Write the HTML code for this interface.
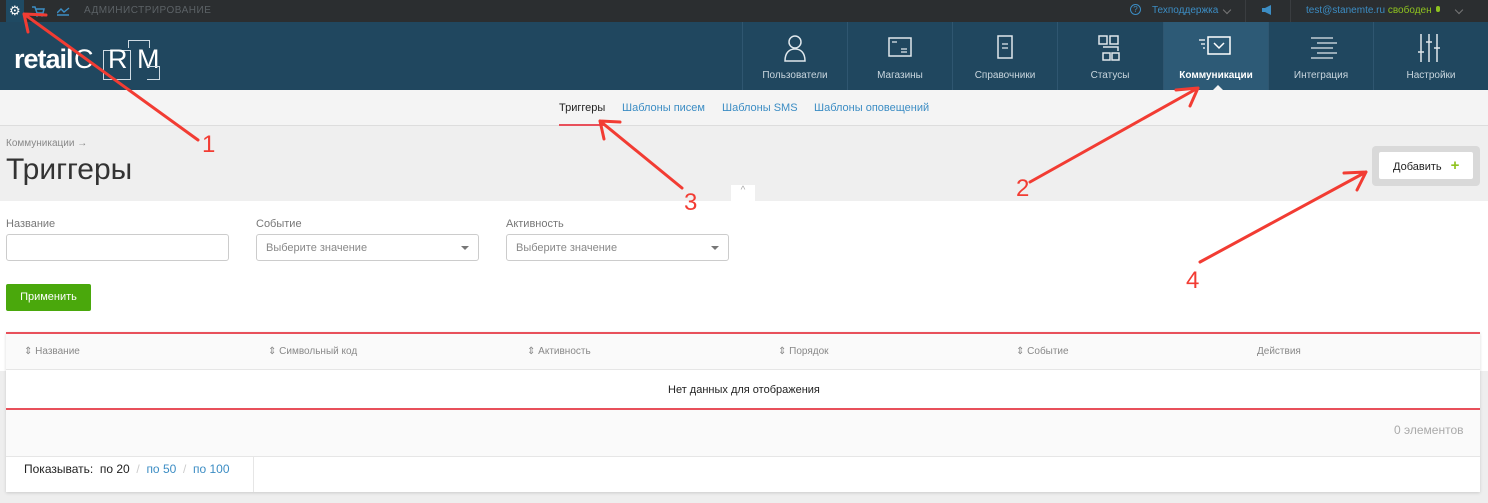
<!DOCTYPE html>
<html><head><meta charset="utf-8"><style>
*{box-sizing:border-box;margin:0;padding:0}
body{width:1488px;height:503px;overflow:hidden;font-family:"Liberation Sans",sans-serif;background:#eeeeee;position:relative;font-size:11px;color:#333}
.top{position:absolute;left:0;top:0;width:1488px;height:22px;background:#2b2e30}
.nav{position:absolute;left:0;top:22px;width:1488px;height:68px;background:#20475f}
.tab{position:absolute;top:0;height:68px;width:105px;border-left:1px solid #2f5670;color:#c9d6de;font-size:10px;text-align:center}
.tab span{position:absolute;left:0;right:0;top:48px}
.tab svg{position:absolute;left:39px;top:12px}
.sub{position:absolute;left:0;top:90px;width:1488px;height:36px;background:#f4f4f4;border-bottom:1px solid #ddd}
.hdr{position:absolute;left:0;top:126px;width:1488px;height:75px;background:#efefef}
.white{position:absolute;left:0;top:201px;width:1488px;height:170px;background:#fff}
.lbl{position:absolute;top:218px;color:#777;font-size:11px}
.inp{position:absolute;top:234px;width:223px;height:27px;border:1px solid #ccc;border-radius:3px;background:#fff;color:#888;font-size:11px;padding:7px 9px}
.inp i{position:absolute;right:9px;top:11px;border:4px solid transparent;border-top:4px solid #777}
.box{position:absolute;left:6px;top:332px;width:1474px;height:160px;background:#fff;box-shadow:0 1px 3px rgba(0,0,0,.15)}
.th{position:absolute;top:346px;color:#888;font-size:10px}
.chev{position:absolute;top:7px;width:6px;height:6px;border-right:1px solid #777;border-bottom:1px solid #777;transform:rotate(45deg)}
</style></head><body>
<div class="top">
 <div style="position:absolute;left:6px;top:0;width:18px;height:22px;background:#1f4a63"></div>
 <span style="position:absolute;left:9px;top:3px;color:#fff;font-size:13px">⚙</span>
 <svg style="position:absolute;left:32px;top:6px" width="13" height="11"><path d="M0 1h3l2 6h6l1-4H4" stroke="#3c8dc4" stroke-width="1.5" fill="none"/><circle cx="5" cy="9.5" r="1.2" fill="#3c8dc4"/><circle cx="10" cy="9.5" r="1.2" fill="#3c8dc4"/></svg>
 <svg style="position:absolute;left:57px;top:6px" width="13" height="10"><path d="M0 7l4-4 3 3 5-4M0 9h12" stroke="#3c8dc4" stroke-width="1.4" fill="none"/></svg>
 <span style="position:absolute;left:84px;top:5px;color:#5c6266;font-size:10px;letter-spacing:.5px">АДМИНИСТРИРОВАНИЕ</span>
 <span style="position:absolute;left:1130px;top:4px;width:11px;height:11px;border:1px solid #3c8dc4;border-radius:50%;color:#3c8dc4;font-size:8px;text-align:center;line-height:10px">?</span>
 <span style="position:absolute;left:1152px;top:5px;color:#3c8dc4;font-size:10px">Техподдержка</span>
 <i class="chev" style="left:1224px"></i>
 <div style="position:absolute;left:1245px;top:0;width:1px;height:22px;background:#3a3d40"></div>
 <svg style="position:absolute;left:1262px;top:5px" width="12" height="10"><path d="M0 3h3l6-3v10L3 7H0z" fill="#3c8dc4"/></svg>
 <div style="position:absolute;left:1290px;top:0;width:1px;height:22px;background:#3a3d40"></div>
 <span style="position:absolute;left:1306px;top:5px;color:#3c8dc4;font-size:10px">test@stanemte.ru <b style="color:#8fc31f;font-weight:normal">свободен</b></span>
 <span style="position:absolute;left:1436px;top:6px;width:4px;height:6px;background:#8fc31f;border-radius:2px"></span>
 <i class="chev" style="left:1456px"></i>
</div>
<div class="nav">
 <div style="position:absolute;left:14px;top:22px;color:#fff;font-size:27px;font-weight:bold;letter-spacing:-1px">retail</div>
 <div style="position:absolute;left:74px;top:22px;color:#fff;font-size:27px">C</div>
 <div style="position:absolute;left:103px;top:28px;width:28px;height:30px;border:1px solid #cfdbe3"></div>
 <div style="position:absolute;left:108px;top:22px;color:#fff;font-size:27px">R</div>
 <div style="position:absolute;left:128px;top:18px;width:22px;height:8px;border:1px solid #cfdbe3;border-bottom:0"></div>
 <div style="position:absolute;left:137px;top:22px;color:#fff;font-size:27px">M</div>
 <div style="position:absolute;left:147px;top:44px;width:13px;height:14px;border:1px solid #cfdbe3;border-left:0"></div>
 <div class="tab" style="left:742px"><svg width="26" height="28"><circle cx="13" cy="8" r="6" stroke="#dfe7ec" stroke-width="1.5" fill="none"/><path d="M3 27c0-8 4-12 10-12s10 4 10 12z" stroke="#dfe7ec" stroke-width="1.5" fill="none"/></svg><span>Пользователи</span></div>
 <div class="tab" style="left:847px"><svg width="26" height="28"><rect x="2" y="4" width="22" height="18" stroke="#dfe7ec" stroke-width="1.5" fill="none"/><path d="M5 8h5M14 15h6M14 18h6" stroke="#dfe7ec" stroke-width="1.2"/></svg><span>Магазины</span></div>
 <div class="tab" style="left:952px"><svg width="26" height="28"><rect x="6" y="2" width="14" height="22" stroke="#dfe7ec" stroke-width="1.5" fill="none"/><path d="M10 10h6M10 14h6" stroke="#dfe7ec" stroke-width="1.2"/></svg><span>Справочники</span></div>
 <div class="tab" style="left:1057px"><svg width="26" height="28"><path d="M2 2h8v8H2zM13 2h8v8h-8zM6 13h15v4M6 19h7v7H6zM15 19h7v7h-7z" stroke="#dfe7ec" stroke-width="1.5" fill="none"/></svg><span>Статусы</span></div>
 <div class="tab" style="left:1163px;background:#2d5a76;color:#fff;font-weight:bold"><svg width="34" height="28" style="left:35px"><path d="M0 6h6M2 10h4M4 14h2" stroke="#fff" stroke-width="1.3"/><rect x="9" y="3" width="22" height="17" stroke="#fff" stroke-width="1.5" fill="none"/><path d="M15 9l5 5 5-5" stroke="#fff" stroke-width="1.5" fill="none"/></svg><span>Коммуникации</span><i style="position:absolute;left:49px;top:63px;border:5px solid transparent;border-bottom:5px solid #f4f4f4;border-top:0"></i></div>
 <div class="tab" style="left:1268px"><svg width="30" height="28"><path d="M3 4h22M9 9h20M3 14h22M9 19h20M3 24h22" stroke="#dfe7ec" stroke-width="1.3"/></svg><span>Интеграция</span></div>
 <div class="tab" style="left:1373px;width:115px"><svg width="30" height="28" style="left:42px"><path d="M5 0v28M13 0v28M21 0v28M2 18h6M10 8h6M18 14h6" stroke="#dfe7ec" stroke-width="1.5"/></svg><span>Настройки</span></div>
</div>
<div class="sub">
 <span style="position:absolute;left:559px;top:12px;color:#222">Триггеры</span>
 <div style="position:absolute;left:559px;top:34px;width:47px;height:2px;background:#e8505b"></div>
 <span style="position:absolute;left:622px;top:12px;color:#3c8dc4">Шаблоны писем</span>
 <span style="position:absolute;left:722px;top:12px;color:#3c8dc4">Шаблоны SMS</span>
 <span style="position:absolute;left:814px;top:12px;color:#3c8dc4">Шаблоны оповещений</span>
</div>
<div class="hdr">
 <span style="position:absolute;left:6px;top:12px;color:#888;font-size:10px">Коммуникации →</span>
 <span style="position:absolute;left:6px;top:27px;color:#333;font-size:30px">Триггеры</span>
 <div style="position:absolute;left:731px;top:59px;width:24px;height:16px;background:#fff;color:#aaa;text-align:center;font-size:10px">^</div>
 <div style="position:absolute;left:1372px;top:20px;width:108px;height:40px;background:#d9d9d9;border-radius:4px"></div>
 <div style="position:absolute;left:1379px;top:26px;width:94px;height:27px;background:#fff;border-radius:2px;font-size:11px;padding:7px 0 0 14px;color:#222;line-height:13px">Добавить <b style="color:#8fc31f;font-size:15px;margin-left:6px">+</b></div>
</div>
<div class="white"></div>
<span class="lbl" style="left:6px">Название</span>
<span class="lbl" style="left:256px">Событие</span>
<span class="lbl" style="left:506px">Активность</span>
<div class="inp" style="left:6px"></div>
<div class="inp" style="left:256px">Выберите значение<i></i></div>
<div class="inp" style="left:506px">Выберите значение<i></i></div>
<div style="position:absolute;left:6px;top:284px;width:85px;height:27px;background:#4aa80c;border-radius:2px;color:#fff;font-size:11px;text-align:center;line-height:27px">Применить</div>
<div class="box">
 <div style="position:absolute;left:0;top:0;width:100%;height:2px;background:#e8505b"></div>
 <div style="position:absolute;left:0;top:2px;width:100%;height:36px;background:#fafafa;border-bottom:1px solid #e6e6e6"></div>
 <div style="position:absolute;left:0;top:76px;width:100%;height:2px;background:#e8505b"></div>
 <div style="position:absolute;left:0;top:78px;width:100%;height:47px;background:#fafafa;border-bottom:1px solid #e6e6e6"></div>
 <div style="position:absolute;left:247px;top:125px;width:1px;height:35px;background:#e6e6e6"></div>
</div>
<span class="th" style="left:24px">⇕ Название</span>
<span class="th" style="left:268px">⇕ Символьный код</span>
<span class="th" style="left:527px">⇕ Активность</span>
<span class="th" style="left:778px">⇕ Порядок</span>
<span class="th" style="left:1016px">⇕ Событие</span>
<span class="th" style="left:1257px">Действия</span>
<span style="position:absolute;left:668px;top:384px;color:#222;font-size:11px">Нет данных для отображения</span>
<span style="position:absolute;left:1394px;top:423px;color:#aaa;font-size:12px">0 элементов</span>
<span style="position:absolute;left:24px;top:462px;color:#222;font-size:12px">Показывать:&nbsp; по 20 <span style="color:#ccc">&nbsp;/&nbsp;</span> <span style="color:#3c8dc4">по 50</span> <span style="color:#ccc">&nbsp;/&nbsp;</span> <span style="color:#3c8dc4">по 100</span></span>
<svg style="position:absolute;left:0;top:0" width="1488" height="503">
<g stroke="#f23c33" stroke-width="3" fill="none" stroke-linecap="round">
<path d="M198 140L24 14M24 14l4 18M24 14l22 1"/>
<path d="M1030 182L1198 88M1198 88l-22 2M1198 88l-8 18"/>
<path d="M682 188L600 121M600 121l4 18M600 121l20 1"/>
<path d="M1200 262L1366 172M1366 172l-22 1M1366 172l-9 18"/>
</g>
<g fill="#f23c33" font-family="Liberation Sans" font-size="24"><text x="202" y="152">1</text><text x="1016" y="196">2</text><text x="684" y="210">3</text><text x="1186" y="288">4</text></g>
</svg>
</body></html>
